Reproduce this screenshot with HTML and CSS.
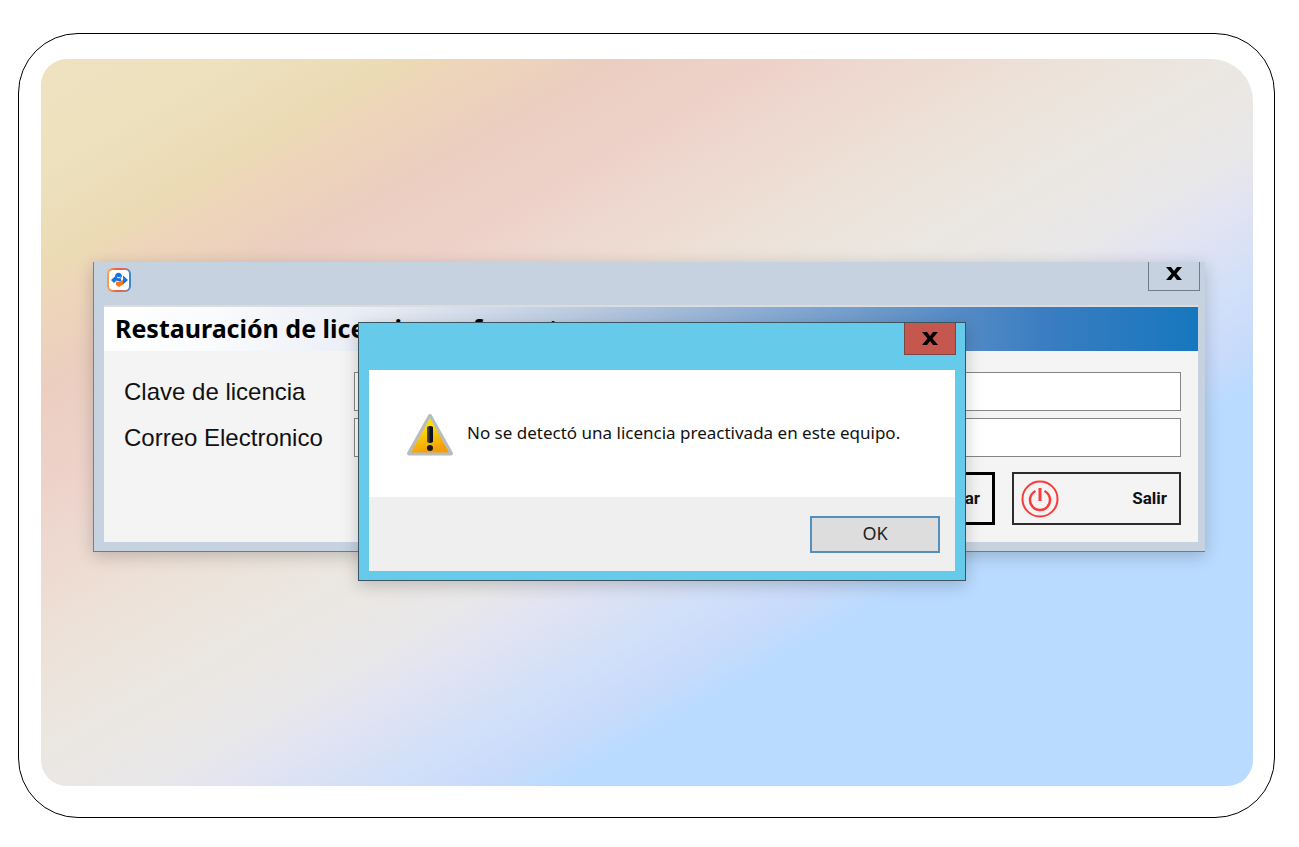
FILE: index.html
```html
<!DOCTYPE html>
<html lang="es">
<head>
    <meta charset="UTF-8">
    <meta name="viewport" content="width=device-width, initial-scale=1.0">
    <title>Restauración de licencia</title>
    <link rel="stylesheet" href="styles.css">
</head>
<body>

    <div class="frame">
        <div class="backdrop">
            <div class="window">
                <!-- Title bar -->
                <div class="titlebar">
                    <svg class="app-icon" viewBox="0 0 24 24">
                        <defs>
                            <linearGradient id="ring" x1="0" x2="1">
                                <stop offset="0" stop-color="#f7a04a"/>
                                <stop offset="0.4" stop-color="#e8613c"/>
                                <stop offset="0.75" stop-color="#d0706a"/>
                                <stop offset="1" stop-color="#3d86d0"/>
                            </linearGradient>
                        </defs>
                        <rect x="1" y="1" width="22" height="22" rx="5" fill="#fff" stroke="url(#ring)" stroke-width="2"/>
                        <path d="M4 12l4-3.500c0-5 7-5 7 0l-1.500 2 1 2-2 1-3-1L7 15z" fill="#1473e6"/>
                        <path d="M16 7.500l5 4.500-5 4.500z" fill="#1473e6"/>
                        <path d="M10 9l2 1 1.500-1" fill="none" stroke="#fff" stroke-width="1"/>
                        <path d="M9 13.500l2 .5 5-2v4.500l-4 2.500-3-2z" fill="#ff7418"/>
                    </svg>
                    <button class="close" type="button" aria-label="Cerrar">
                        <svg viewBox="0 0 16 13"><path d="M0 0h5l3 4 3-4h5l-5.500 6.500L16 13h-5L8 9l-3 4H0l5.500-6.500z"/></svg>
                    </button>
                </div>

                <!-- License form -->
                <form class="content">
                    <h1>Restauración de licencia por formateo</h1>
                    <div class="fields">
                        <label for="clave">Clave de licencia</label>
                        <input id="clave" type="text">
                        <label for="correo">Correo Electronico</label>
                        <input id="correo" type="email">
                    </div>
                    <div class="actions">
                        <button class="action main" type="button">Restaurar</button>
                        <button class="action" type="button">
                            <svg viewBox="0 0 38 38" fill="none" stroke="#fb3a3a">
                                <circle cx="19" cy="19" r="17.500" stroke-width="2"/>
                                <path d="M14.500 11a10 10 0 1 0 9 0" stroke-width="2.500"/>
                                <path d="M19 8v13" stroke-width="3"/>
                            </svg>
                            <span>Salir</span>
                        </button>
                    </div>
                </form>

                <!-- Message box -->
                <div class="message" role="alertdialog" aria-describedby="texto">
                    <div class="message-bar">
                        <button class="close close-red" type="button" aria-label="Cerrar">
                            <svg viewBox="0 0 16 13"><path d="M0 0h5l3 4 3-4h5l-5.500 6.500L16 13h-5L8 9l-3 4H0l5.500-6.500z"/></svg>
                        </button>
                    </div>
                    <div class="message-body">
                        <svg class="warning" viewBox="0 0 48 44">
                            <defs>
                                <linearGradient id="yellow" x1="0" y1="0" x2="0.3" y2="1">
                                    <stop offset="0" stop-color="#fff000"/>
                                    <stop offset="0.5" stop-color="#f9cf0c"/>
                                    <stop offset="1" stop-color="#f3a006"/>
                                </linearGradient>
                                <linearGradient id="mark" x1="0" x2="1">
                                    <stop offset="0" stop-color="#5c5c50"/>
                                    <stop offset="0.6" stop-color="#0c1020"/>
                                </linearGradient>
                            </defs>
                            <path d="M24 3L3 40.500h42z" fill="#b9bbc0" stroke="#b9bbc0" stroke-width="4" stroke-linejoin="round"/>
                            <path d="M24 5L5 39.500h38z" fill="url(#yellow)"/>
                            <path d="M21 14q3-2 6 0v15q-3 2-6 0z" fill="url(#mark)"/>
                            <circle cx="24" cy="35" r="3" fill="#15161e"/>
                        </svg>
                        <p id="texto">No se detectó una licencia preactivada en este equipo.</p>
                    </div>
                    <div class="message-footer">
                        <button class="ok" type="button">OK</button>
                    </div>
                </div>
            </div>
        </div>
    </div>

</body>
</html>
```
FILE: styles.css
```css
* {
    margin: 0;
    padding: 0;
    box-sizing: border-box;
}

body {
    display: flex;
    min-height: 100vh;
    padding: 33px 24px 29px 18px;
    background: #fff;
    font-family: "Liberation Sans", Arial, sans-serif;
    color: #111;
}

/* Outer frame */
.frame {
    flex: 1;
    display: flex;
    padding: 25px 21px 31px 22px;
    border: 1px solid #000;
    border-radius: 60px;
}

.backdrop {
    flex: 1;
    padding: 203px 48px 40px 52px;
    border-radius: 26px 42px 26px 26px;
    background: linear-gradient(150deg, #eee2c0 0%, #ede1be 8%, #ebdab4 15%, #eed6b9 17%, #ebcebf 23%, #eed2ca 30%, #ede0d6 40%, #ebe7e1 48%, #e9e8e9 55%, #e4e4f1 58%, #d3e0f8 64%, #c8dbfc 69%, #b9dbff 72%);
}

/* Main window */
.window {
    position: relative;
    border-left: 1px solid #75808c;
    border-bottom: 1px solid #6f7b88;
    background: #c6d2e0;
    box-shadow: 0 4px 16px rgba(0, 0, 0, 0.2);
}

.titlebar {
    display: flex;
    justify-content: space-between;
    height: 43px;
    padding: 0 5px 0 13px;
}

.app-icon {
    width: 24px;
    height: 24px;
    margin-top: 6px;
}

.close {
    display: flex;
    justify-content: center;
    align-items: center;
    width: 52px;
    height: 29px;
    padding-bottom: 6px;
    border: 1px solid #747c86;
    border-top: none;
    background: transparent;
}

.close svg {
    width: 16px;
    height: 13px;
}

/* Form */
.content {
    margin: 0 7px 9px 10px;
    padding-bottom: 17px;
    border-top: 2px solid #dcdcdc;
    background: #f4f4f4;
}

h1 {
    height: 44px;
    padding-left: 11px;
    background: linear-gradient(to right, #fff 0%, #fafbfd 10%, #e8ecf5 25%, #b7c8e0 45%, #6f9bcc 70%, #3b7dc1 86%, #1677be 100%);
    font-family: "Noto Sans", sans-serif;
    font-size: 25px;
    line-height: 42px;
    color: #000;
}

.fields {
    display: grid;
    grid-template-columns: 230px 1fr;
    align-items: center;
    row-gap: 7px;
    padding: 21px 17px 0 20px;
}

.fields label {
    font-size: 24px;
}

.fields input {
    height: 39px;
    padding: 0 8px;
    border: 1px solid #858585;
    background: #fff;
    font-size: 20px;
}

.actions {
    display: flex;
    justify-content: flex-end;
    gap: 17px;
    padding: 15px 17px 0;
}

.action {
    display: flex;
    justify-content: space-between;
    align-items: center;
    width: 169px;
    height: 53px;
    padding: 0 12px 0 7px;
    border: 2px solid #2c2c2c;
    background: #f4f4f4;
    font-family: Roboto, sans-serif;
    font-size: 17px;
    font-weight: bold;
    color: #111;
}

.action svg {
    width: 38px;
    height: 38px;
}

.action span {
    padding-bottom: 2px;
}

.main {
    justify-content: flex-end;
    padding-bottom: 2px;
    border: 3px solid #000;
}

/* Message box */
.message {
    position: absolute;
    top: 60px;
    left: 264px;
    right: 239px;
    padding: 0 10px 9px;
    border: 1px solid #3b5560;
    background: #66caea;
    box-shadow: 0 4px 16px rgba(0, 0, 0, 0.2);
}

.message-bar {
    display: flex;
    justify-content: flex-end;
    height: 47px;
    margin-right: -1px;
}

.close-red {
    height: 32px;
    padding-bottom: 1px;
    border-color: #7c4544;
    background: #c4584e;
}

.message-body {
    display: flex;
    align-items: center;
    gap: 13px;
    height: 127px;
    padding: 2px 20px 0 37px;
    background: #fff;
}

.warning {
    width: 48px;
    height: 44px;
    flex: none;
}

.message-body p {
    padding-bottom: 4px;
    font-family: "Noto Sans", sans-serif;
    font-size: 17px;
    white-space: nowrap;
}

.message-footer {
    display: flex;
    justify-content: flex-end;
    padding: 19px 15px 18px;
    background: #efefef;
}

.ok {
    width: 130px;
    height: 37px;
    padding-bottom: 3px;
    border: 2px solid #5590bd;
    background: #ddd;
    font-family: "Noto Sans", sans-serif;
    font-size: 18px;
    color: #222;
}
```
